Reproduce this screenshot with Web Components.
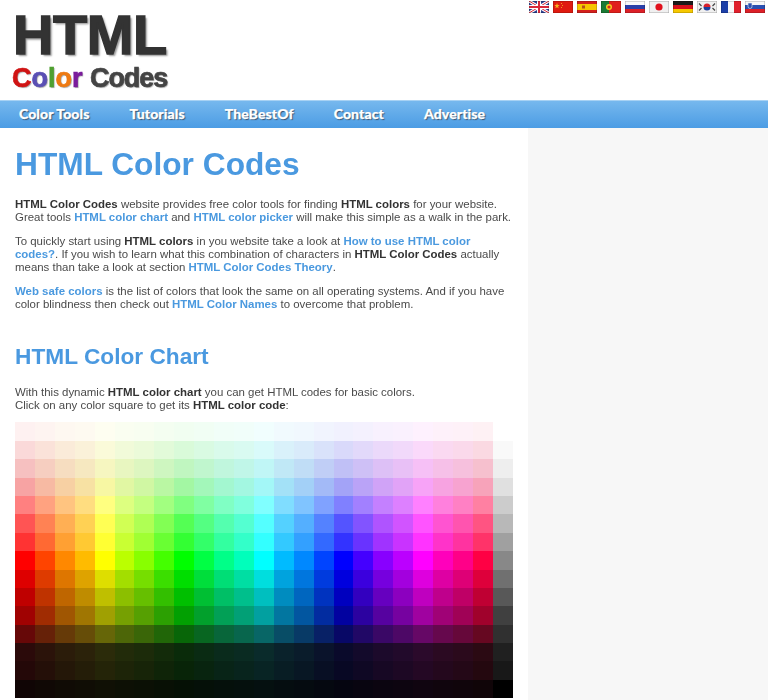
<!DOCTYPE html>
<html lang="en"><head><meta charset="utf-8"><title>HTML Color Codes</title>
<style>
html,body{margin:0;padding:0;background:#fff}
body{font-family:"Liberation Sans",Arial,sans-serif;color:#444}
</style></head><body>
<site-page></site-page>
<script>
class SiteLogo extends HTMLElement{constructor(){super();this.attachShadow({mode:'open'}).innerHTML=`<style>
:host{display:block;font-family:"Liberation Sans",sans-serif;font-weight:700;line-height:1;padding:7px 0 0 13px;filter:blur(.3px)}
.a{display:block;font-size:56px;letter-spacing:-.4px;color:#333;-webkit-text-stroke:1.400px #333;text-shadow:2px 2px 2px #999;height:58px}
.b{display:block;font-size:27px;color:#444;-webkit-text-stroke:.7px currentColor;text-shadow:1px 1px 1px #aaa;white-space:nowrap;margin-left:-1px}
.b span:nth-child(1){color:#d01414}.b span:nth-child(2){color:#5a4fb4}.b span:nth-child(3){color:#4fa030}.b span:nth-child(4){color:#ee7a12}.b span:nth-child(5){color:#7a1c9c}
.b em{font-style:normal;letter-spacing:-1.100px}
</style><span class="a">HTML</span><span class="b"><span>C</span><span>o</span><span>l</span><span>o</span><span>r</span> <em>Codes</em></span>`}}
customElements.define('site-logo',SiteLogo);

const FLAGS={
gb:`<rect width="20" height="12" fill="#2b3f8e"/><path d="M0 0L20 12M20 0L0 12" stroke="#fff" stroke-width="3"/><path d="M0 0L20 12M20 0L0 12" stroke="#d8283a" stroke-width="1"/><path d="M10 0V12M0 6H20" stroke="#fff" stroke-width="4"/><path d="M10 0V12M0 6H20" stroke="#d8283a" stroke-width="2"/>`,
cn:`<rect width="20" height="12" fill="#e01a10"/><path d="M4 2l.7 2 2 .1-1.6 1.2.6 2L4 6.2 2.3 7.300l.6-2L1.300 4.100l2-.1z" fill="#f6b520"/><circle cx="8.500" cy="2.500" r=".5" fill="#f6c520"/><circle cx="9.500" cy="4.500" r=".5" fill="#f6c520"/><circle cx="8.500" cy="6.500" r=".5" fill="#f6c520"/>`,
es:`<rect width="20" height="12" fill="#d4201c"/><rect y="3" width="20" height="6" fill="#f6c600"/><rect x="5" y="4.500" width="3" height="3" fill="#b8501c"/>`,
pt:`<rect width="20" height="12" fill="#e0201c"/><rect width="8" height="12" fill="#1a7a34"/><circle cx="8" cy="6" r="3" fill="#f4d020"/><circle cx="8" cy="6" r="1.600" fill="#d8281c"/>`,
ru:`<rect width="20" height="12" fill="#f8f8fa"/><rect y="4" width="20" height="4" fill="#2a3fa8"/><rect y="8" width="20" height="4" fill="#dc2028"/>`,
jp:`<rect width="20" height="12" fill="#f0f0f0"/><circle cx="10" cy="6" r="3.600" fill="#e0101c"/>`,
de:`<rect width="20" height="4" fill="#1a1a1a"/><rect y="4" width="20" height="4" fill="#d8101c"/><rect y="8" width="20" height="4" fill="#f6c800"/>`,
kr:`<rect width="20" height="12" fill="#f0f0f0"/><path d="M6.500 6a3.500 3.500 0 0 1 7 0z" fill="#d8202c"/><path d="M6.500 6a3.500 3.500 0 0 0 7 0z" fill="#1f3f9c"/><path d="M2 2.500l2.500 2.500M2 9.500l2.500-2.500M18 2.500l-2.500 2.500M18 9.500l-2.500-2.500" stroke="#444" stroke-width="1.200"/>`,
fr:`<rect width="20" height="12" fill="#f8f8f8"/><rect width="7" height="12" fill="#1c3fa8"/><rect x="13" width="7" height="12" fill="#e0202c"/>`,
si:`<rect width="20" height="12" fill="#f6f6f8"/><rect y="4" width="20" height="4" fill="#2a4fb0"/><rect y="8" width="20" height="4" fill="#dc2028"/><path d="M3 2h4v3.500a2 2 0 0 1-4 0z" fill="#2a4fb0" stroke="#f0f0f0" stroke-width=".6"/>`};
class FlagIcon extends HTMLElement{connectedCallback(){if(this.shadowRoot)return;const c=this.getAttribute('code');this.attachShadow({mode:'open'}).innerHTML=`<style>:host{display:block;width:20px;height:12px}svg{display:block;filter:blur(.35px)}</style><svg width="20" height="12" viewBox="0 0 20 12">${FLAGS[c]}<rect x=".25" y=".25" width="19.500" height="11.500" fill="none" stroke="#000" stroke-opacity=".3" stroke-width=".5"/></svg>`}}
customElements.define('flag-icon',FlagIcon);

class FlagStrip extends HTMLElement{constructor(){super();this.attachShadow({mode:'open'}).innerHTML=`<style>:host{display:flex;gap:4px;padding:1px 3px 0 0}</style>`+Object.keys(FLAGS).map(k=>`<flag-icon code="${k}"></flag-icon>`).join('')}}
customElements.define('flag-strip',FlagStrip);

class SiteHeader extends HTMLElement{constructor(){super();this.attachShadow({mode:'open'}).innerHTML=`<style>:host{display:flex;justify-content:space-between;height:100px;background:#fff}</style><site-logo></site-logo><flag-strip></flag-strip>`}}
customElements.define('site-header',SiteHeader);

class NavBar extends HTMLElement{constructor(){super();this.attachShadow({mode:'open'}).innerHTML=`<style>
:host{display:flex;gap:40px;align-items:center;box-sizing:border-box;height:28px;padding:0 0 2px 19px;background:linear-gradient(#78b9ee,#4b9ce4);box-shadow:inset 0 1px 0 #a8d2f4;font:900 14px Lato,sans-serif;letter-spacing:.1px;color:#fff;-webkit-text-stroke:.25px #fff;text-shadow:1px 1px 1px #33506e}
a{color:inherit;text-decoration:none}
a:first-child{letter-spacing:-.25px}
</style><a>Color Tools</a><a>Tutorials</a><a>TheBestOf</a><a>Contact</a><a>Advertise</a>`}}
customElements.define('nav-bar',NavBar);

class ColorChart extends HTMLElement{constructor(){super();
const hue=[[255,0,0],[255,68,0],[255,136,0],[255,187,0],[255,255,0],[187,255,0],[136,255,0],[68,255,0],[0,255,0],[0,255,68],[0,255,136],[0,255,187],[0,255,255],[0,187,255],[0,136,255],[0,68,255],[0,0,255],[68,0,255],[136,0,255],[187,0,255],[255,0,255],[255,0,187],[255,0,136],[255,0,68]];
const gray=[255,249,238,224,204,184,160,136,112,88,64,48,32,24,0];
const lite=[[.95,.995],[.87,.98],[.78,.965],[.66,.97],[.5,1],[.33,1],[.2,1],[0,1]];
const dark=[[.87,0],[.75,0],[.62,2],[.37,8],[.13,10],[.11,8],[.045,5]];
let h='';
for(let r=0;r<15;r++){for(let c=0;c<25;c++){let col;
 if(c==24)col=[gray[r],gray[r],gray[r]];
 else if(r<=7){const [t,m]=lite[r];col=hue[c].map(v=>(v+(255-v)*t)*m)}
 else{const [s,m]=dark[r-8];col=hue[c].map(v=>v*s+m)}
 h+=`<i style="background:rgb(${col.map(Math.round).join(',')})"></i>`}}
this.attachShadow({mode:'open'}).innerHTML=`<style>:host{display:grid;grid-template-columns:repeat(25,19.920px);grid-template-rows:repeat(15,18.400px);width:498px;filter:blur(.4px)}i{display:block}</style>`+h}}
customElements.define('color-chart',ColorChart);

class MainContent extends HTMLElement{constructor(){super();this.attachShadow({mode:'open'}).innerHTML=`<style>
:host{display:block;width:528px;box-sizing:border-box;padding:0 15px;background:#fff;font:11.450px/13px "Liberation Sans",sans-serif;color:#4a4a4a;height:572px;overflow:hidden}
h1,h2{font-weight:700;color:#4a99e0;margin:0;line-height:1;filter:blur(.3px)}
h1{font-size:31.700px;padding-top:21px;margin-bottom:17px}
h2{font-size:22.700px;margin:34px 0 19px}
p{margin:0 0 11px;filter:blur(.3px)}
b{color:#333}a{color:#4a99df;font-weight:700;text-decoration:none}
color-chart{margin-top:10px}
</style>
<h1>HTML Color Codes</h1>
<p><b>HTML Color Codes</b> website provides free color tools for finding <b>HTML colors</b> for your website.<br>Great tools <a>HTML color chart</a> and <a>HTML color picker</a> will make this simple as a walk in the park.</p>
<p>To quickly start using <b>HTML colors</b> in you website take a look at <a>How to use HTML color</a><br><a>codes?</a>. If you wish to learn what this combination of characters in <b>HTML Color Codes</b> actually<br>means than take a look at section <a>HTML Color Codes Theory</a>.</p>
<p><a>Web safe colors</a> is the list of colors that look the same on all operating systems. And if you have<br>color blindness then check out <a>HTML Color Names</a> to overcome that problem.</p>
<h2>HTML Color Chart</h2>
<p style="margin:0">With this dynamic <b>HTML color chart</b> you can get HTML codes for basic colors.<br>Click on any color square to get its <b>HTML color code</b>:</p>
<color-chart></color-chart>`}}
customElements.define('main-content',MainContent);

class SitePage extends HTMLElement{constructor(){super();this.attachShadow({mode:'open'}).innerHTML=`<style>
:host{display:block;width:768px;height:700px;overflow:hidden}
.row{display:flex}aside{flex:1;background:#f7f7f7}
</style><site-header></site-header><nav-bar></nav-bar><div class="row"><main-content></main-content><aside></aside></div>`}}
customElements.define('site-page',SitePage);
</script></body></html>
